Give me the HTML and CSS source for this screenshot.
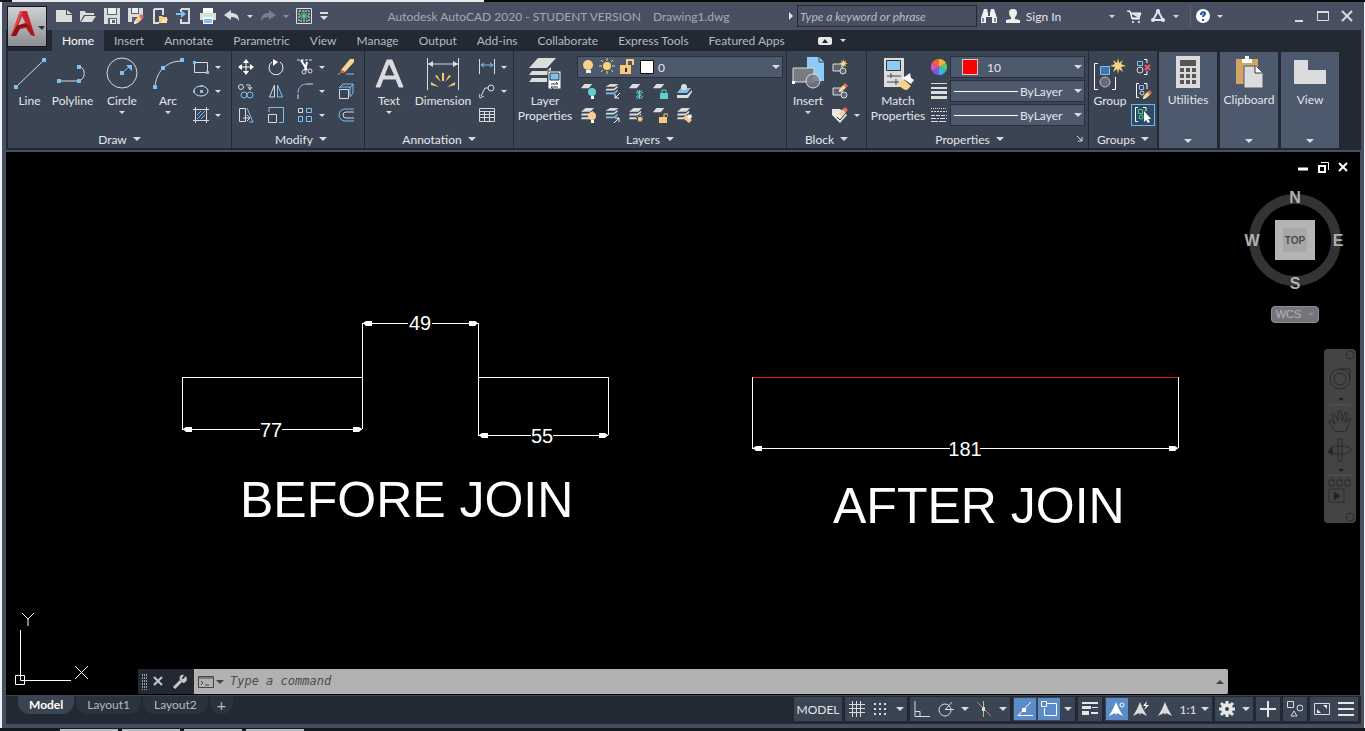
FILE: index.html
```html
<!DOCTYPE html>
<html lang="en">
<head>
    <meta charset="UTF-8">
    <meta name="viewport" content="width=device-width, initial-scale=1.0">
    <title>Autodesk AutoCAD 2020 - Drawing1.dwg</title>
    <link rel="stylesheet" href="styles.css">
</head>
<body>
    <!-- shared shapes for the layer and group icons -->
    <svg class="defs" width="0" height="0">
        <symbol id="sheet" viewBox="0 0 16 16"><path d="M5 1h9L10 6H1z" fill="#dcdcdc"/></symbol>
        <symbol id="stack" viewBox="0 0 16 16">
            <path d="M6 1h9l-4 4H1z" fill="#dcdcdc"/>
            <path d="M2 7h8l4-3v2l-4 3H1zM2 11h8l4-4v2l-4 4H1z" fill="#dcdcdc"/>
        </symbol>
        <symbol id="stackblue" viewBox="0 0 16 16">
            <path d="M6 1h9l-4 3H1z" fill="#dcdcdc"/>
            <path d="M2 6h8l4-3v2l-4 3H1z" fill="#dcdcdc"/>
            <path d="M2 10h8l4-3v2l-4 3H1z" fill="#7cc0f4"/>
        </symbol>
        <symbol id="pencil" viewBox="0 0 10 10">
            <path d="M0 10l1-4 4-4 3 3-4 4z" fill="#f6d08a"/><path d="M5 2l2-2 3 3-2 2z" fill="#e8695f"/><path d="M0 10l1-3 2 2z" fill="#fff"/>
        </symbol>
        <symbol id="burst" viewBox="0 0 16 16">
            <path d="M8 0l1 5 4-3-2 4 5 2-5 1 2 5-4-3-1 5-1-5-4 3 2-5-5-1 5-2-2-4 4 3z" fill="#fbd27f"/>
        </symbol>
    </svg>

    <div class="window">
        <header class="top">
            <button class="logo" aria-label="Application menu">
                <svg width="38" height="38" viewBox="0 0 38 38">
                    <path d="M3 28L12 3h7l8 25-4-1-5-7-6 1-4 7z" fill="#c9242b"/>
                    <path d="M14 8l-4 10 8-2z" fill="#b9bbbd"/>
                    <path d="M3 28l5-10 9-3 5 3-10 2-4 8z" fill="#8d1218"/>
                    <path d="M12 3h3l-7 16-5 9z" fill="#e5484b"/>
                    <path d="M18 18l4-1 5 11-4-1z" fill="#a8161e"/>
                    <path d="M30 18h7l-3 4z" fill="#333"/>
                </svg>
            </button>
            <div class="titlebar">
                <div class="quick">
                    <button class="qa" aria-label="New"><svg viewBox="0 0 16 16"><path d="M0 2h10v5h6v7H0zM11 2l5 4h-5z" fill="#dcdcdc"/></svg></button>
                    <button class="qa" aria-label="Open"><svg viewBox="0 0 16 16"><path d="M0 14V3h5l1 2h8v2H4z" fill="#dcdcdc"/><path d="M5 8h11l-4 6H1z" fill="#dcdcdc"/></svg></button>
                    <button class="qa" aria-label="Save"><svg viewBox="0 0 16 16"><path d="M0 0h16v16H0z" fill="#dcdcdc"/><path d="M3 0h10v7H3zM4 10h9v6H4z" fill="#596274"/><path d="M4 0h8v6H4zM6 11h6v5H6z" fill="#eee"/><path d="M8 12h3v3H8z" fill="#596274"/></svg></button>
                    <button class="qa" aria-label="Save as"><svg viewBox="0 0 16 16"><path d="M0 0h15v7l-7 7H0z" fill="#dcdcdc"/><path d="M3 0h8v6H3zM4 9h5v5H4z" fill="#596274"/><path d="M4 0h6v5H4z" fill="#eee"/><use href="#pencil" x="6" y="6" width="10" height="10"/></svg></button>
                    <button class="qa" aria-label="Open from web"><svg viewBox="0 0 16 16"><path d="M2 1h9v6M2 1v14h5" stroke="#dcdcdc" stroke-width="2" fill="none"/><path d="M7 15V8h3l1 1h4v6z" fill="#f6cf85"/><path d="M9 15l2-4h5l-2 4z" fill="#fde3ae"/></svg></button>
                    <button class="qa" aria-label="Save to web"><svg viewBox="0 0 16 16"><path d="M5 1h8v14H5v-4M5 1v3" stroke="#dcdcdc" stroke-width="2" fill="none"/><path d="M0 5h5V2l5 4-5 4V7H0z" fill="#7cc0f4"/></svg></button>
                    <button class="qa" aria-label="Plot"><svg viewBox="0 0 16 16"><path d="M3 0h10v5H3z" fill="#fff"/><path d="M0 5h16v7H0z" fill="#dcdcdc"/><path d="M3 9h10v7H3z" fill="#fff"/><path d="M4 11h8v4H4z" fill="#7cc0f4"/></svg></button>
                    <button class="qa" aria-label="Undo"><svg viewBox="0 0 16 16"><path d="M0 7l7-5v3c5 0 8 2 8 8-2-3-4-4-8-4v3z" fill="#dcdcdc"/></svg></button>
                    <button class="drop" aria-label="Undo list"></button>
                    <button class="qa" aria-label="Redo"><svg viewBox="0 0 16 16"><path d="M16 7L9 2v3c-5 0-8 2-8 8 2-3 4-4 8-4v3z" fill="#767e8d"/></svg></button>
                    <button class="drop dim" aria-label="Redo list"></button>
                    <button class="qa" aria-label="Select"><svg viewBox="0 0 16 16" stroke="#dcdcdc" fill="none"><path d="M.5.5h15v15H.5z"/><path d="M3 3h10v10H3z" stroke-dasharray="2 1"/><path d="M8 3v10M3 8h10M5 5l6 6M11 5l-6 6" stroke="#63d48b"/></svg></button>
                    <button class="qa narrow" aria-label="Customize"><svg viewBox="0 0 16 16"><path d="M4 5h8" stroke="#dcdcdc" stroke-width="2"/><path d="M4 8h8l-4 4z" fill="#dcdcdc"/></svg></button>
                </div>
                <div class="title"><span>Autodesk AutoCAD 2020 - STUDENT VERSION</span><span>Drawing1.dwg</span></div>
                <div class="account">
                    <button class="drop side" aria-label="Collapse search"></button>
                    <input class="search" type="text" placeholder="Type a keyword or phrase" aria-label="Search">
                    <button class="qa" aria-label="Find"><svg viewBox="0 0 16 16"><path d="M3 1h3l1 4h2l1-4h3l3 9v5h-5V9H5v6H0v-5z" fill="#f0f0f0"/><path d="M2 10v4M14 10v4" stroke="#222"/><path d="M7 5v3h2V5" fill="#555"/></svg></button>
                    <button class="qa" aria-label="User"><svg viewBox="0 0 16 16"><path d="M8 1c6 0 4 7 2 8v2l5 1v3H1v-3l5-1V9C4 8 2 1 8 1z" fill="#f0f0f0"/></svg></button>
                    <button class="signin">Sign In</button>
                    <button class="drop" aria-label="Account menu"></button>
                    <button class="qa cart" aria-label="App Store"><svg viewBox="0 0 16 16"><path d="M1 3h3l2 8h8M5 5h10l-2 5H6z" fill="#dcdcdc" stroke="#fff"/><circle cx="7" cy="14" r="1" fill="#fff"/><circle cx="13" cy="14" r="1" fill="#fff"/></svg></button>
                    <button class="qa" aria-label="Stay connected"><svg viewBox="0 0 16 16"><path d="M8 3l5 9H3z" fill="none" stroke="#dfe6f2" stroke-width="2"/><circle cx="8" cy="3" r="2" fill="#dfe6f2"/><circle cx="3" cy="12" r="2" fill="#dfe6f2"/><circle cx="13" cy="12" r="2" fill="#dfe6f2"/></svg></button>
                    <button class="drop" aria-label="Connect menu"></button>
                    <button class="qa help" aria-label="Help"><svg viewBox="0 0 16 16"><circle cx="8" cy="8" r="7" fill="#fff"/><path d="M6 7c0-4 5-3 4-1-1 1-2 1-2 3M8 11v2" stroke="#23519b" stroke-width="2" fill="none"/></svg></button>
                    <button class="drop" aria-label="Help menu"></button>
                    <div class="winbtns">
                        <button class="qa" aria-label="Minimize"><svg viewBox="0 0 16 16"><path d="M4 13h8" stroke="#dcdcdc" stroke-width="2"/></svg></button>
                        <button class="qa" aria-label="Maximize"><svg viewBox="0 0 16 16"><path d="M2.500 3.500h11v9h-11z" stroke="#dcdcdc" fill="none"/><path d="M2 4h12" stroke="#dcdcdc" stroke-width="2"/></svg></button>
                        <button class="qa" aria-label="Close"><svg viewBox="0 0 16 16"><path d="M3 3l10 10M13 3L3 13" stroke="#dcdcdc" stroke-width="2"/></svg></button>
                    </div>
                </div>
            </div>
            <nav class="tabs">
                <a href="#" class="active">Home</a>
                <a href="#">Insert</a>
                <a href="#">Annotate</a>
                <a href="#">Parametric</a>
                <a href="#">View</a>
                <a href="#">Manage</a>
                <a href="#">Output</a>
                <a href="#">Add-ins</a>
                <a href="#">Collaborate</a>
                <a href="#">Express Tools</a>
                <a href="#">Featured Apps</a>
                <button class="qa tabmin" aria-label="Minimize ribbon"><svg viewBox="0 0 16 16"><rect x="1" y="4" width="14" height="8" rx="2" fill="#e8e8e8"/><path d="M5 10h6L8 6z" fill="#222"/></svg></button>
                <button class="drop" aria-label="Ribbon display"></button>
            </nav>
        </header>

        <main class="ribbon">
            <section class="panel draw">
                <div class="tools">
                    <button class="big line"><svg viewBox="0 0 32 32"><path d="M2 30L30 3" stroke="#d8dbe0" fill="none"/><path d="M0 28h4v4H0zM28 1h4v4h-4z" fill="#7cc0f4"/></svg>Line</button>
                    <button class="big poly"><svg viewBox="0 0 32 32"><path d="M2 24h20a8 8 0 0 0 0-15" stroke="#d8dbe0" fill="none"/><path d="M0 22h4v4H0zM20 22h4v4h-4zM20 8h4v4h-4z" fill="#7cc0f4"/></svg>Polyline</button>
                    <button class="big circle"><svg viewBox="0 0 32 32"><circle cx="16" cy="16" r="15" stroke="#d8dbe0" fill="none"/><path d="M16 16l7-6" stroke="#7cc0f4"/><path d="M14 14h4v4h-4zM20 8h6v6z" fill="#7cc0f4"/></svg>Circle<i class="caret"></i></button>
                    <button class="big arc"><svg viewBox="0 0 32 32"><path d="M3 30C4 16 13 4 30 4" stroke="#d8dbe0" fill="none"/><path d="M1 28h4v4H1zM9 9h4v4H9zM28 1h4v4h-4z" fill="#7cc0f4"/></svg>Arc<i class="caret"></i></button>
                    <div class="grid pair">
                        <button class="tool" aria-label="Rectangle"><svg viewBox="0 0 16 16"><path d="M1.500 3.500h13v10h-13z" class="l"/><path d="M0 2h3v3H0zM13 12h3v3h-3z" class="fb"/></svg></button><button class="drop" aria-label="More"></button>
                        <button class="tool" aria-label="Ellipse"><svg viewBox="0 0 16 16"><ellipse cx="8" cy="8" rx="7" ry="5" class="l"/><path d="M7 7h3v3H7zM0 7h2v3H0zM7 2h3v2H7z" class="fb"/></svg></button><button class="drop" aria-label="More"></button>
                        <button class="tool" aria-label="Hatch"><svg viewBox="0 0 16 16"><path d="M2.500 0v16M13.500 0v16M0 2.500h16M0 13.500h16" class="l"/><path d="M4 8l4-4M4 12l8-8M8 12l4-4" class="b"/></svg></button><button class="drop" aria-label="More"></button>
                    </div>
                </div>
                <button class="ptitle">Draw<i class="caret lg"></i></button>
            </section>

            <section class="panel modify">
                <div class="tools">
                    <div class="grid four">
                        <button class="tool" aria-label="Move"><svg viewBox="0 0 16 16"><path d="M8 2v12M2 8h12" stroke="#fff"/><path d="M8 0l3 4H5zM8 16l3-4H5zM0 8l4-3v6zM16 8l-4-3v6z" fill="#fff"/></svg></button>
                        <button class="tool" aria-label="Rotate"><svg viewBox="0 0 16 16"><path d="M4 3a7 7 0 1 0 8 0" class="l2"/><path d="M5 0l5 3-5 4z" fill="#fff"/></svg></button>
                        <button class="tool" aria-label="Trim"><svg viewBox="0 0 16 16"><path d="M0 1h16" class="l" stroke-dasharray="3 1"/><path d="M4 1l6 10M10 3L8 11" stroke="#fff" stroke-width="2"/><circle cx="7" cy="13" r="2" class="l"/><circle cx="13" cy="12" r="2" class="l"/></svg></button>
                        <button class="drop" aria-label="More"></button>
                        <button class="tool" aria-label="Erase"><svg viewBox="0 0 16 16"><path d="M3 11L12 0h4v3L7 13z" fill="#f8d38b"/><path d="M3 10l4 4H2z" fill="#e8574e"/><path d="M0 15h2M8 15h8" class="b"/></svg></button>
                        <button class="tool" aria-label="Copy"><svg viewBox="0 0 16 16"><circle cx="3" cy="4" r="2.500" class="l"/><path d="M8 2h4v4M10 4l2 3 2-3" class="l"/><circle cx="6" cy="12" r="3" class="b"/><circle cx="12" cy="12" r="3" class="b"/></svg></button>
                        <button class="tool" aria-label="Mirror"><svg viewBox="0 0 16 16"><path d="M6.500 2v12h-5z" class="l"/><path d="M9.500 2v12h5z" class="b"/></svg></button>
                        <button class="tool" aria-label="Fillet"><svg viewBox="0 0 16 16"><path d="M1 16V11M10 1h6" class="l"/><path d="M1 10c0-6 4-9 9-9" class="b"/></svg></button>
                        <button class="drop" aria-label="More"></button>
                        <button class="tool" aria-label="Explode"><svg viewBox="0 0 16 16"><path d="M1.500 6.500h9v9h-9z" class="l"/><path d="M1 5l4-4h10v9l-3 4M12 5l3-4M12 4v9M2 4h10" class="b"/></svg></button>
                        <button class="tool" aria-label="Stretch"><svg viewBox="0 0 16 16"><path d="M1.500 1.500h6v13h-6zM5 11h6M9 8l3 3-3 3" class="l"/><path d="M9 1l6 14h-4" class="b"/></svg></button>
                        <button class="tool" aria-label="Scale"><svg viewBox="0 0 16 16"><path d="M.5 7.500h8v8h-8z" class="l"/><path d="M1 5V.5h14.500v15H11" class="b"/></svg></button>
                        <button class="tool" aria-label="Array"><svg viewBox="0 0 16 16"><path d="M1.500 1.500h4v4h-4z" class="l"/><path d="M9.500 1.500h5v4h-5zM1.500 9.500h4v5h-4zM9.500 9.500h5v5h-5z" class="b"/></svg></button>
                        <button class="drop" aria-label="More"></button>
                        <button class="tool" aria-label="Offset"><svg viewBox="0 0 16 16"><path d="M16 2H7a6 6 0 0 0 0 12h9" class="b"/><path d="M16 5H8a3 3 0 0 0 0 6h8" class="l"/></svg></button>
                    </div>
                </div>
                <button class="ptitle">Modify<i class="caret lg"></i></button>
            </section>

            <section class="panel annotation">
                <div class="tools">
                    <button class="big text"><svg viewBox="0 0 32 32"><path d="M3 30L14 3h5l11 27h-4l-3-8H10l-3 8zM11 19h11L16 6z" fill="#dcdcdc" stroke="#dcdcdc" fill-rule="evenodd"/></svg>Text<i class="caret"></i></button>
                    <button class="big dimension"><svg viewBox="0 0 32 32"><path d="M.5 1v32M31.500 1v32M1 7h30" class="l"/><path d="M1 7l5-3v6zM31 7l-5-3v6z" fill="#dcdcdc"/><path d="M15 16h2v8h-2zM8 19l2-1 4 7zM24 19l-2-1-4 7zM4 25v3l8 2zM28 25v3l-8 2z" fill="#f6cf6a"/></svg>Dimension</button>
                    <div class="grid pair">
                        <button class="tool" aria-label="Linear"><svg viewBox="0 0 16 16"><path d="M.5 0v15M15.500 0v15" class="l"/><path d="M2 6h12M5 4L2 6l3 2M11 4l3 2-3 2" class="b"/></svg></button><button class="drop" aria-label="More"></button>
                        <button class="tool" aria-label="Leader"><svg viewBox="0 0 16 16"><circle cx="12" cy="5" r="3" class="l"/><path d="M9 5H6L2 13M0 11l1 4 4-2" class="l"/></svg></button><button class="drop" aria-label="More"></button>
                        <button class="tool" aria-label="Table"><svg viewBox="0 0 16 16"><path d="M.5 1.500h15v13H.5zM1 4.500h15M1 7.500h15M1 10.500h15M5.500 5v10M10.500 5v10" class="l"/></svg></button>
                    </div>
                </div>
                <button class="ptitle">Annotation<i class="caret lg"></i></button>
            </section>

            <section class="panel layers">
                <div class="tools">
                    <button class="big layerprops"><svg viewBox="0 0 32 32"><path d="M9 1h18L18 11H0z" fill="#dcdcdc"/><path d="M3 14h15l4-4v4l-4 4H0zM3 21h15v4H0z" fill="#dcdcdc"/><path d="M19 14h13v18H19z" fill="#fff" stroke="#3b4453"/><path d="M21 16h9v7h-9z" fill="#7cc0f4" stroke="#333"/><path d="M22 27h7l-2-2M29 30h-7l2 2" stroke="#333" fill="none"/></svg>Layer<br>Properties</button>
                    <div class="layerside">
                        <div class="combo">
                            <svg class="states" viewBox="0 0 80 20" width="80" height="20">
                                <circle cx="10" cy="8" r="5" fill="#fbd08a"/><path d="M8 13h5v3H8z" fill="#eee"/>
                                <circle cx="29" cy="9" r="4" fill="#fbd27f"/><path d="M29 1v3M29 14v3M21 9h3M34 9h3M23 3l2 2M33 13l2 2M35 3l-2 2M25 13l-2 2" stroke="#fbd27f" stroke-width="1"/>
                                <path d="M42 8h11v9H42z" fill="#f8c977"/><path d="M49 9V3h6v5" stroke="#f8c977" stroke-width="2" fill="none"/><path d="M47 11h2v4h-2z" fill="#333"/>
                                <path d="M62.500 3.500h13v13h-13z" fill="#fff" stroke="#111"/>
                            </svg>
                            <select aria-label="Layer"><option>0</option></select>
                        </div>
                        <div class="grid five">
                            <button class="tool" aria-label="Off"><svg viewBox="0 0 16 16"><use href="#sheet" width="14" height="14"/><circle cx="12" cy="9" r="4" fill="#5fd0cf"/><path d="M11 13h3v3h-3z" fill="#fff"/></svg></button>
                            <button class="tool" aria-label="Isolate"><svg viewBox="0 0 16 16"><use href="#stackblue" width="16" height="15"/><path d="M16 10l-5 5M11 11v4h4" stroke="#fff" fill="none"/></svg></button>
                            <button class="tool" aria-label="Freeze"><svg viewBox="0 0 16 16"><use href="#sheet" width="14" height="14"/><path d="M11.500 7v9M8 9l7 5M15 9l-7 5M9 7l2 3 3-3M9 16l2-3 3 3" stroke="#5fd0cf" fill="none"/></svg></button>
                            <button class="tool" aria-label="Lock"><svg viewBox="0 0 16 16"><use href="#sheet" width="14" height="14"/><path d="M8 10h8v6H8z" fill="#5fd0cf"/><path d="M10 10V7h4v3" stroke="#5fd0cf" fill="none"/></svg></button>
                            <button class="tool" aria-label="Make current"><svg viewBox="0 0 16 16"><path d="M5 5h10l-4 5H1z" fill="#7cc0f4"/><path d="M1 12h10l5-5v2l-4 6H1z" fill="#dcdcdc"/><circle cx="8" cy="4" r="3" fill="#dcdcdc"/></svg></button>
                            <button class="tool" aria-label="Turn all on"><svg viewBox="0 0 16 16"><use href="#stack" width="15" height="15"/><circle cx="12" cy="9" r="4" fill="#fbd08a"/><path d="M11 13h3v3h-3z" fill="#fff"/></svg></button>
                            <button class="tool" aria-label="Unisolate"><svg viewBox="0 0 16 16"><use href="#stackblue" width="16" height="15"/><path d="M10 16l5-5M11 11h4v4" stroke="#fff" fill="none"/></svg></button>
                            <button class="tool" aria-label="Thaw"><svg viewBox="0 0 16 16"><use href="#stack" width="15" height="15"/><circle cx="12" cy="12" r="4" fill="#3b4453"/><circle cx="12" cy="12" r="2" fill="#fbd08a"/><path d="M12 8v8M8 12h8M9 9l6 6M15 9l-6 6" stroke="#fbd08a" stroke-dasharray="1 1"/></svg></button>
                            <button class="tool" aria-label="Unlock"><svg viewBox="0 0 16 16"><use href="#sheet" width="14" height="14"/><path d="M7 10h8v6H7z" fill="#f8c977"/><path d="M12 10V7h4v3" stroke="#f8c977" fill="none"/></svg></button>
                            <button class="tool" aria-label="Match layer"><svg viewBox="0 0 16 16"><use href="#stack" width="15" height="15"/><path d="M7 11l3-3 6 5-3 3z" fill="#f6d08a"/><path d="M11 10l4-3 1 3-2 2z" fill="#fff"/></svg></button>
                        </div>
                    </div>
                </div>
                <button class="ptitle">Layers<i class="caret lg"></i></button>
            </section>

            <section class="panel block">
                <div class="tools">
                    <button class="big insert"><svg viewBox="0 0 32 32"><path d="M15 0h12l5 5v19H15z" fill="#8ecbf5"/><path d="M27 0v5h5" stroke="#3b4453" fill="none"/><path d="M1 11h21v14H1z" fill="#777b83" stroke="#ddd"/><circle cx="21" cy="24" r="7" fill="#777b83" fill-opacity=".8" stroke="#ddd"/><path d="M0 24h3v3H0z" fill="#fff"/></svg>Insert<i class="caret"></i></button>
                    <div class="grid pair">
                        <button class="tool" aria-label="Create block"><svg viewBox="0 0 16 16"><path d="M1 5h9v7H1z" fill="#5f6570" stroke="#ddd"/><circle cx="11" cy="12" r="3" fill="#5f6570" stroke="#ddd"/><use href="#burst" x="7" y="0" width="9" height="9"/></svg></button><span></span>
                        <button class="tool" aria-label="Edit block"><svg viewBox="0 0 16 16"><path d="M1 5h9v7H1z" fill="#5f6570" stroke="#ddd"/><circle cx="12" cy="12" r="3" fill="#5f6570" stroke="#ddd"/><use href="#pencil" x="7" y="0" width="9" height="9"/></svg></button><span></span>
                        <button class="tool" aria-label="Edit attributes"><svg viewBox="0 0 16 16"><path d="M0 2h8l7 6-7 8-8-8z" fill="#e8e8e8"/><path d="M5 10l3 3 5-6" stroke="#333" fill="none"/><use href="#pencil" x="6" y="0" width="10" height="10"/></svg></button><button class="drop" aria-label="More"></button>
                    </div>
                </div>
                <button class="ptitle">Block<i class="caret lg"></i></button>
            </section>

            <section class="panel properties">
                <div class="tools">
                    <button class="big match"><svg viewBox="0 0 32 32"><path d="M2 1h20v29H2z" fill="#dcdcdc"/><path d="M4.500 3.500h14v10h-14z" fill="#8ecbf5" stroke="#333"/><path d="M5 19h14M5 25h12M9 16v5M14 22v6" stroke="#444"/><path d="M16 27l5-5 8 7-4 4c-3 0-6-2-9-6z" fill="#f8d38b"/><path d="M20 21l4-2 4-3 1 5 3 2-3 4z" fill="#fff"/></svg>Match<br>Properties</button>
                    <div class="props">
                        <svg viewBox="0 0 16 16"><path d="M8 8V0a8 8 0 0 1 7 4z" fill="#f6b13c"/><path d="M8 8l7-4a8 8 0 0 1 0 8z" fill="#5ac46a"/><path d="M8 8l7 4a8 8 0 0 1-7 4z" fill="#35b7e8"/><path d="M8 8v8a8 8 0 0 1-7-4z" fill="#7e57e0"/><path d="M8 8l-7 4a8 8 0 0 1 0-8z" fill="#e04fb5"/><path d="M8 8L1 4a8 8 0 0 1 7-4z" fill="#f0633e"/></svg>
                        <div class="combo"><span class="swatch"></span><select aria-label="Object color"><option>10</option></select></div>
                        <svg viewBox="0 0 16 16"><path d="M0 0h16v1H0zM0 4h16v2H0zM0 8h16v3H0zM0 13h16v3H0z" fill="#dcdcdc"/></svg>
                        <div class="combo"><span class="stroke"></span><select aria-label="Lineweight"><option>ByLayer</option></select></div>
                        <svg viewBox="0 0 16 16" stroke="#dcdcdc"><path d="M0 1.500h16" stroke-dasharray="1 1"/><path d="M0 4.500h16" stroke-dasharray="2 1"/><path d="M0 8.500h16" stroke-dasharray="4 1"/><path d="M0 11.500h16" stroke-dasharray="5 1 2 1"/><path d="M0 14.500h16" stroke-dasharray="7 1"/></svg>
                        <div class="combo"><span class="stroke"></span><select aria-label="Linetype"><option>ByLayer</option></select></div>
                    </div>
                </div>
                <div class="prow">
                    <button class="ptitle">Properties<i class="caret lg"></i></button>
                    <button class="launcher" aria-label="Properties palette"><svg width="6" height="6" viewBox="0 0 6 6"><path d="M0 0l5 5M5 1v4H1" stroke="#dcdcdc" fill="none"/></svg></button>
                </div>
            </section>

            <section class="panel groups">
                <div class="tools">
                    <button class="big group"><svg viewBox="0 0 32 32"><path d="M4 6.500H.5v26H4M18 32.500h3.500V20" stroke="#fff" fill="none"/><path d="M6.500 9.500h9v8h-9z" fill="#3a76a8" stroke="#7cc0f4"/><circle cx="11" cy="25" r="5" fill="#666b74" stroke="#bbb"/><use href="#burst" x="16" y="1" width="16" height="16"/></svg>Group</button>
                    <div class="grid one">
                        <button class="tool" aria-label="Ungroup"><svg viewBox="0 0 16 16"><path d="M1.500 2.500h5v4h-5z" class="b"/><circle cx="4" cy="11" r="3" class="l"/><path d="M8 .5h3V4M8 15.500h3V12" stroke="#fff" fill="none"/><path d="M9 6l5 5M14 6l-5 5" stroke="#f05b5b" stroke-width="2"/></svg></button>
                        <button class="tool" aria-label="Group edit"><svg viewBox="0 0 16 16"><path d="M3 .5H.5v14H3M8 .5h3V6" stroke="#fff" fill="none"/><path d="M3.500 2.500h4v4h-4z" class="b"/><circle cx="6" cy="10" r="2" class="l"/><use href="#pencil" x="7" y="7" width="9" height="9"/></svg></button>
                        <button class="tool selected" aria-label="Group selection"><svg viewBox="0 0 16 16"><path d="M3 .5H.5v14H3M8 .5h3V4" stroke="#fff" fill="none"/><path d="M3.500 2.500h4v4h-4z" stroke="#4fce7a" fill="none"/><circle cx="6" cy="10" r="2" stroke="#4fce7a" fill="none"/><path d="M9 4v11l2-2 2 3 2-1-2-3h3z" fill="#fff"/></svg></button>
                    </div>
                </div>
                <button class="ptitle">Groups<i class="caret lg"></i></button>
            </section>

            <button class="folded"><svg viewBox="0 0 32 32"><path d="M4 0h24v32H4z" fill="#dcdcdc"/><path d="M8 4h16v6H8z" fill="#555"/><path d="M8 12h4v4H8zM14 12h4v4h-4zM20 12h4v4h-4zM8 18h4v4H8zM14 18h4v4h-4zM20 18h4v4h-4zM8 24h4v4H8zM14 24h4v4h-4zM20 24h4v4h-4z" fill="#555"/></svg>Utilities<i class="caret lg"></i></button>
            <button class="folded"><svg viewBox="0 0 32 32"><path d="M3 3h22v25H3z" fill="#d2a566"/><path d="M9 3h3V0h4v3h3v4H9z" fill="#fff"/><path d="M11 10h12l7 7v15H11z" fill="#dcdcdc" stroke="#4d596d"/><path d="M22 10v7h7" fill="#fff" stroke="#333"/></svg>Clipboard<i class="caret lg"></i></button>
            <button class="folded"><svg viewBox="0 0 32 32"><path d="M0 4h14v10h18v14H0z" fill="#dcdcdc"/></svg>View<i class="caret lg"></i></button>
        </main>

        <div class="canvas">
            <svg class="drawing" width="100%" height="100%">
                <g class="geometry">
                    <path d="M176 277V225H356M356 171V277M472 171V283M472 225H602V283"/>
                    <path d="M356 171H402M426 171H472M176 277H254M276 277H356M472 283H525M547 283H602"/>
                    <path d="M746 225V296M1172 225V296M746 296H944M974 296H1172"/>
                </g>
                <rect class="joined" x="747" y="225" width="425" height="1"/>
                <path class="arrows" d="M357 171l3-2h6v5h-6zM472 171l-3-2h-6v5h6zM177 277l3-2h6v5h-6zM356 277l-3-2h-6v5h6zM473 283l3-2h6v5h-6zM602 283l-3-2h-6v5h6zM747 296l3-2h6v5h-6zM1172 296l-3-2h-6v5h6z"/>
                <g class="dims">
                    <text x="414" y="178">49</text>
                    <text x="265" y="285">77</text>
                    <text x="536" y="291">55</text>
                    <text x="959" y="304">181</text>
                </g>
                <g class="captions">
                    <text x="234" y="365">BEFORE JOIN</text>
                    <text x="827" y="371">AFTER JOIN</text>
                </g>
            </svg>

            <svg class="ucs" width="76" height="76" viewBox="0 0 76 76">
                <path d="M7.500 18v50.500H58M2.500 63.500h9v9h-9zM62 54l13 13M75 54L62 67M9 1l6 6 6-6M15 7v7"/>
            </svg>

            <div class="docbtns">
                <button aria-label="Minimize drawing"><svg viewBox="0 0 12 12"><path d="M1 8h10" stroke-width="3"/></svg></button>
                <button aria-label="Restore drawing"><svg viewBox="0 0 12 12"><path d="M2 5h6v6H2z" stroke-width="2"/><path d="M4 1.500h7.500V9" stroke-width="1"/></svg></button>
                <button aria-label="Close drawing"><svg viewBox="0 0 12 12"><path d="M2 2l8 8M10 2l-8 8" stroke-width="2"/></svg></button>
            </div>

            <div class="viewcube">
                <svg width="104" height="108" viewBox="0 0 104 108">
                    <circle cx="52" cy="54" r="41" fill="none" stroke="#333" stroke-width="10"/>
                    <path d="M32 34h40v40H32z" fill="#b4b4b4"/>
                    <path d="M40 42h24v24H40z" fill="#a6a7a9"/>
                    <text x="52" y="58" class="face">TOP</text>
                    <text x="52" y="17">N</text>
                    <text x="52" y="103">S</text>
                    <text x="9" y="60">W</text>
                    <text x="95" y="60">E</text>
                </svg>
                <button class="wcs">WCS<i class="caret"></i></button>
            </div>

            <div class="navbar">
                <svg width="32" height="174" viewBox="0 0 32 174" fill="none" stroke="#2a2a2a">
                    <circle cx="26" cy="6" r="4"/>
                    <circle cx="16" cy="30" r="10"/><circle cx="16" cy="30" r="6"/><path d="M16 20h10v10"/>
                    <path d="M14 49h6l-3 3zM14 120h6l-3 3z" fill="#202020" stroke="none"/>
                    <path d="M4 56h24M4 126h24" stroke="#555"/>
                    <path d="M11 82l-6-9 1-2 5 4-3-10 2-1 4 8V62h3l1 10 3-9 2 1-2 10 4-5 2 1-5 12-2 1z"/>
                    <path d="M14 90h4v22h-4z"/><ellipse cx="16" cy="101" rx="11" ry="4"/><path d="M8 99l-4 4 5 3z" fill="#202020"/>
                    <path d="M5 131h5v6H5zM13 131h5v6h-5zM21 131h5v6h-5zM5 140h15v13H5z"/><path d="M10 143l6 4-6 4z" fill="#202020"/>
                    <circle cx="26" cy="168" r="4"/>
                </svg>
            </div>

            <form class="command">
                <span class="grip"></span>
                <button type="button" aria-label="Close"><svg viewBox="0 0 16 16"><path d="M4 3l8 8M12 3l-8 8" stroke="#c8c8c8" stroke-width="2"/></svg></button>
                <button type="button" aria-label="Customize"><svg viewBox="0 0 16 16"><path d="M2 14l7-7" stroke="#c8c8c8" stroke-width="3"/><path d="M14 2l-3 3-1 0V4l2-3C8 0 7 4 8 6l3 3c3 0 5-3 3-7z" fill="#c8c8c8"/></svg></button>
                <label class="field">
                    <svg width="16" height="12" viewBox="0 0 16 12" fill="none" stroke="#444"><path d="M.5.5h15v11H.5zM1 2h14M3 5l2 2-2 2M7 9h4"/></svg>
                    <i class="caret"></i>
                    <input type="text" placeholder="Type a command" aria-label="Command">
                    <i class="caret up"></i>
                </label>
            </form>
        </div>

        <footer class="statusbar">
            <nav class="layouts">
                <a href="#" class="active">Model</a>
                <a href="#">Layout1</a>
                <a href="#">Layout2</a>
                <a href="#" class="plus" aria-label="New layout">+</a>
            </nav>
            <div class="status">
                <div class="sgroup"><button class="wide">MODEL</button></div>
                <div class="sgroup">
                    <button aria-label="Grid"><svg viewBox="0 0 16 16"><path d="M3.500 0v16M7.500 0v16M11.500 0v16M0 3.500h16M0 7.500h16M0 11.500h16" class="l"/></svg></button>
                    <button aria-label="Snap"><svg viewBox="0 0 16 16"><path d="M1 3h14M1 8h14M1 13h14" stroke="#d8dbe0" stroke-width="2" stroke-dasharray="2 3"/></svg></button>
                    <button class="drop lg" aria-label="Snap settings"></button>
                </div>
                <div class="sgroup">
                    <button aria-label="Ortho"><svg viewBox="0 0 16 16"><path d="M1 0v15.500h15M1 10.500h5V15" class="l"/></svg></button>
                    <button aria-label="Polar"><svg viewBox="0 0 16 16"><circle cx="7" cy="9" r="6" class="l"/><path d="M7 8.500h9M7 9l7-8" class="l"/></svg></button>
                    <button class="drop lg" aria-label="Polar settings"></button>
                    <button aria-label="Isodraft"><svg viewBox="0 0 16 16"><path d="M1 1l14 14" stroke="#d77"/><path d="M7.500 0v16" stroke="#7d9"/><path d="M6 6h3v4H6z" fill="#d8dbe0"/></svg></button>
                    <button class="drop lg" aria-label="Isodraft settings"></button>
                </div>
                <div class="sgroup">
                    <button class="on" aria-label="Object snap tracking"><svg viewBox="0 0 16 16"><path d="M14 1L1 14.500h15" stroke="#fff" fill="none"/><path d="M5 7h4v4H5z" fill="#fff"/></svg></button>
                    <button class="on" aria-label="Object snap"><svg viewBox="0 0 16 16"><path d="M6 2.500h9.500v12h-12V7M.5.5h5v5h-5z" stroke="#fff" fill="none"/></svg></button>
                    <button class="drop lg" aria-label="Object snap settings"></button>
                </div>
                <div class="sgroup"><button aria-label="Lineweight"><svg viewBox="0 0 16 16"><path d="M0 1h16v2H0zM0 5h9v3H0zM10 6h6v1h-6zM0 10h7v4H0zM9 11h7v2H9z" fill="#e6e6e6"/></svg></button></div>
                <div class="sgroup">
                    <button class="on" aria-label="Annotation visibility"><svg viewBox="0 0 16 16"><path d="M7 1l3 7 4 7-6-3-1 2-1-2-6 3 4-7z" fill="#fff"/><circle cx="13" cy="4" r="2" stroke="#fff" fill="none"/></svg></button>
                    <button aria-label="Auto scale"><svg viewBox="0 0 16 16"><path d="M7 1l3 7 4 7-6-3-1 2-1-2-6 3 4-7z" fill="#dcdcdc"/><path d="M14 0l-4 5h3l-2 4 5-5h-3z" fill="#fff"/></svg></button>
                    <button aria-label="Annotation scale"><svg viewBox="0 0 16 16"><path d="M8 1l3 7 4 7-6-3-1 2-1-2-6 3 4-7z" fill="#dcdcdc"/></svg></button>
                    <button class="scale">1:1<i class="caret lg"></i></button>
                </div>
                <div class="sgroup">
                    <button aria-label="Workspace"><svg viewBox="0 0 16 16"><circle cx="8" cy="8" r="4" fill="none" stroke="#e6e6e6" stroke-width="4"/><path d="M8 0v3M8 13v3M0 8h3M13 8h3M2 2l3 3M11 11l3 3M14 2l-3 3M5 11l-3 3" stroke="#e6e6e6" stroke-width="3"/></svg></button>
                    <button class="drop lg" aria-label="Workspace list"></button>
                </div>
                <div class="sgroup"><button aria-label="Annotation monitor"><svg viewBox="0 0 16 16"><path d="M8 0v16M0 8h16" stroke="#e6e6e6" stroke-width="2"/></svg></button></div>
                <div class="sgroup"><button aria-label="Isolate objects"><svg viewBox="0 0 16 16"><path d="M.5.5h6v6h-6zM7 10l3 5H4z" class="l"/><circle cx="13" cy="7" r="3" class="l"/></svg></button></div>
                <div class="sgroup">
                    <button aria-label="Clean screen"><svg viewBox="0 0 16 16"><path d="M.5 2.500h15v11H.5z" class="l"/><path d="M9 4h4v4zM3 8v4h4z" fill="#e6e6e6"/></svg></button>
                    <button aria-label="Customization"><svg viewBox="0 0 16 16"><path d="M0 2h16M0 8h16M0 14h16" stroke="#e6e6e6" stroke-width="2"/></svg></button>
                </div>
            </div>
        </footer>
    </div>
    <div class="taskbar"><i></i><i></i><i></i><i></i></div>
</body>
</html>
```
FILE: styles.css
```css
* {
    box-sizing: border-box;
}
body {
    margin: 0;
    height: 100vh;
    display: flex;
    flex-direction: column;
    overflow: hidden;
    background: linear-gradient(90deg, #15171b 12px, #e8eaee 12px, #e8eaee 484px, #08090b 484px) top / 100% 2px no-repeat #eef1f5;
    font-family: Lato, "Open Sans", sans-serif;
    font-size: 12px;
    line-height: 15px;
    color: #e4e6ea;
}
a {
    color: inherit;
    text-decoration: none;
}
button {
    padding: 0;
    border: 0;
    background: none;
    color: inherit;
    font: inherit;
    display: flex;
    align-items: center;
    justify-content: center;
}
svg {
    display: block;
    flex: none;
}
input, select {
    font: inherit;
    color: inherit;
    border: 0;
    background: none;
    outline: none;
    min-width: 0;
}
.defs {
    position: absolute;
}
.l {
    stroke: #d8dbe0;
    fill: none;
}
.l2 {
    stroke: #f0f0f0;
    fill: none;
}
.b {
    stroke: #7cc0f4;
    fill: none;
}
.fb {
    fill: #7cc0f4;
}

.window {
    flex: 1;
    min-height: 0;
    margin: 2px 1px 0 2px;
    padding: 0 3px 4px 4px;
    display: flex;
    flex-direction: column;
    background: #454f60;
}

/* carets */
.caret, .drop::after {
    content: "";
    display: block;
    border: 3px solid transparent;
    border-top-color: #d8dbe0;
    border-bottom: 0;
}
.caret.lg, .drop.lg::after {
    border-width: 4px 4px 0 4px;
}
.caret.up {
    border-width: 0 4px 4px 4px;
    border-bottom: 4px solid #444;
}
.drop {
    width: 12px;
    height: 24px;
}
.drop.dim::after {
    border-top-color: #8a909c;
}
.drop.side::after {
    border: 4px solid transparent;
    border-left-color: #e4e6ea;
    border-right: 0;
}

/* title bar and tabs */
.top {
    display: grid;
    grid-template-columns: 46px 1fr;
    grid-template-rows: 28px 21px;
    background: linear-gradient(#474f61 28px, #222933 28px);
}
.logo {
    grid-row: 1 / 3;
    width: 40px;
    height: 41px;
    margin: 4px 0 0 1px;
    border: 1px solid #14171c;
    background: linear-gradient(#cfd1d3, #8b8d91);
}
.titlebar, .quick, .account, .winbtns {
    display: flex;
    align-items: center;
}
.qa {
    width: 24px;
    height: 24px;
}
.qa svg, .tool svg, .props > svg, .sgroup svg {
    width: 16px;
    height: 16px;
}
.qa.narrow {
    width: 16px;
}
.title {
    flex: 1;
    display: flex;
    justify-content: center;
    gap: 12px;
    color: #a3a9b4;
    white-space: nowrap;
}
.search {
    width: 180px;
    height: 22px;
    padding: 0 2px;
    border: 1px solid #242b36;
    font-style: italic;
}
.search::placeholder {
    color: #b8bdc6;
    opacity: 1;
}
.signin {
    width: 37px;
    margin-right: 44px;
    white-space: nowrap;
}
.cart {
    margin-left: 4px;
}
.help {
    margin-left: 8px;
    border-left: 1px solid #596274;
}
.winbtns {
    margin: 0 2px 0 61px;
}
.tabs {
    display: flex;
    color: #b4bac4;
}
.tabs a {
    padding: 3px 10px 0;
    white-space: nowrap;
}
.tabs .active {
    background: #3b4453;
    color: #fff;
}
.tabmin {
    height: 21px;
    margin-left: 18px;
}
.tabs .drop {
    height: 21px;
}

/* ribbon */
.ribbon {
    display: flex;
    padding: 0 0 2px 2px;
    border-bottom: 2px solid #454f60;
    background: #222933;
}
.panel {
    display: flex;
    flex-direction: column;
    padding-top: 4px;
    border-right: 1px solid #222933;
    background: #3b4453;
}
.tools {
    display: flex;
    height: 72px;
}
.ptitle {
    height: 21px;
    padding-top: 3px;
    gap: 6px;
}
.big {
    flex-direction: column;
    justify-content: flex-start;
    padding-top: 2px;
    line-height: 15px;
}
.big svg, .folded svg {
    width: 32px;
    height: 32px;
    margin-bottom: 4px;
    overflow: visible;
}
.big .caret {
    margin-top: 3px;
}
.grid {
    display: grid;
    grid-auto-rows: 24px;
    align-items: center;
    justify-items: start;
    align-content: start;
}
.tool {
    width: 16px;
    height: 24px;
}
.tool.selected {
    width: 24px;
    height: 22px;
    margin-left: -5px;
    border: 1px solid #6fb4ea;
    background: #2f4a66;
}
.pair {
    grid-template-columns: 19px 12px;
}
.four {
    grid-template-columns: 30px 29px 19px 22px 16px;
}
.five {
    grid-template-columns: repeat(5, 24px);
    padding-left: 3px;
}
.draw {
    width: 224px;
}
.line, .poly {
    width: 43px;
}
.circle {
    width: 56px;
}
.arc {
    width: 36px;
}
.draw .grid {
    margin-left: 7px;
}
.modify {
    width: 133px;
    padding-left: 6px;
}
.annotation {
    width: 149px;
}
.text {
    width: 48px;
}
.dimension {
    width: 60px;
}
.annotation .grid {
    margin-left: 6px;
}
.layers {
    width: 273px;
}
.layerprops {
    width: 62px;
}
.layerside {
    flex: 1;
    padding: 1px 3px 0 1px;
}
.combo {
    display: flex;
    align-items: center;
    position: relative;
    height: 22px;
    border: 1px solid #2a313d;
    background: #4d596d;
}
.combo::after {
    content: "";
    position: absolute;
    right: 2px;
    top: 8px;
    border: 4px solid transparent;
    border-top-color: #d8dbe0;
    border-bottom: 0;
    pointer-events: none;
}
.combo select {
    flex: 1;
    height: 20px;
    padding: 0;
    appearance: none;
}
.layerside .five {
    margin-top: 1px;
}
.block {
    width: 80px;
}
.insert {
    width: 42px;
}
.block .grid {
    margin-left: 3px;
}
.properties {
    width: 222px;
}
.match {
    width: 62px;
}
.props {
    flex: 1;
    display: grid;
    grid-template-columns: 16px 1fr;
    grid-auto-rows: 24px;
    align-items: center;
    column-gap: 3px;
    padding: 0 3px 0 2px;
}
.swatch {
    width: 16px;
    height: 16px;
    margin: 0 9px 0 11px;
    border: 1px solid #ccc;
    background: #f00;
}
.stroke {
    width: 64px;
    height: 1px;
    margin: 0 2px 0 3px;
    background: #fff;
}
.prow {
    display: flex;
}
.prow .ptitle {
    flex: 1;
}
.launcher {
    width: 16px;
    height: 21px;
    padding-top: 3px;
}
.groups {
    width: 69px;
}
.group {
    width: 42px;
}
.groups .grid {
    margin-left: 5px;
}
.folded {
    flex-direction: column;
    justify-content: flex-start;
    width: 58px;
    margin: 1px 0 0 3px;
    padding-top: 4px;
    background: #4d596d;
}
.panel + .folded {
    margin-left: 1px;
}
.folded .caret {
    margin: auto 0 5px;
}

/* drawing area */
.canvas {
    flex: 1;
    min-height: 0;
    margin-right: 1px;
    position: relative;
    background: #000;
}
.drawing {
    position: absolute;
    font-family: "Liberation Sans", Arial, sans-serif;
}
.geometry {
    stroke: #fff;
    fill: none;
    shape-rendering: crispEdges;
}
.joined {
    fill: #d81e1e;
}
.arrows, .dims, .captions {
    fill: #fff;
}
.dims {
    font-size: 20px;
    text-anchor: middle;
}
.captions {
    font-size: 50px;
}
.ucs {
    position: absolute;
    left: 7px;
    bottom: 7px;
    stroke: #fff;
    fill: none;
}
.docbtns {
    position: absolute;
    top: 9px;
    right: 11px;
    display: flex;
    gap: 8px;
}
.docbtns svg {
    width: 12px;
    height: 12px;
    stroke: #fff;
    fill: none;
}
.viewcube {
    position: absolute;
    top: 34px;
    right: 13px;
    display: flex;
    flex-direction: column;
    align-items: center;
    font-family: "Liberation Sans", Arial, sans-serif;
}
.viewcube text {
    fill: #b0b0b0;
    font-size: 16px;
    font-weight: bold;
    text-anchor: middle;
}
.viewcube .face {
    fill: #4a4d52;
    font-size: 10px;
}
.wcs {
    width: 48px;
    height: 17px;
    margin-top: 12px;
    gap: 7px;
    border: 1px solid #8d8d94;
    border-radius: 4px;
    background: #74747c;
    color: #b5b5ba;
    font-size: 11px;
}
.wcs .caret {
    border-top-color: #8f8f98;
}
.navbar {
    position: absolute;
    top: 197px;
    right: 4px;
    border-radius: 4px;
    background: #444;
}
.command {
    position: absolute;
    left: 132px;
    right: 132px;
    bottom: 1px;
    height: 25px;
    display: flex;
    align-items: center;
    background: #222933;
}
.command button {
    width: 24px;
}
.command button svg {
    width: 16px;
    height: 16px;
}
.grip {
    width: 6px;
    height: 17px;
    margin-left: 4px;
    background: repeating-linear-gradient(#222933 0 1px, transparent 1px 3px), repeating-linear-gradient(90deg, #9aa0aa 0 1px, transparent 1px 2px);
}
.command .grip + button {
    width: 20px;
}
.field {
    flex: 1;
    height: 25px;
    margin-left: 2px;
    padding: 0 4px;
    display: flex;
    align-items: center;
    gap: 2px;
    border-radius: 0 2px 2px 0;
    background: #b1b1b1;
}
.field input {
    flex: 1;
    padding: 0 4px;
    font-family: "DejaVu Sans Mono", monospace;
    font-style: italic;
    color: #333;
}
.field input::placeholder {
    color: #4c4c4c;
    opacity: 1;
}
.field .caret {
    border-width: 4px 4px 0 4px;
    border-top-color: #444;
}
.field .caret.up {
    border-width: 0 4px 4px 4px;
}

/* status bar */
.statusbar {
    display: flex;
    justify-content: space-between;
    height: 29px;
    border-top: 1px solid #3b4453;
    background: #222933;
}
.layouts {
    display: flex;
    gap: 2px;
    padding-left: 12px;
    color: #b4bac4;
}
.layouts a {
    height: 18px;
    padding: 1px 11px 0;
    border-radius: 0 0 12px 12px;
    background: #2a323e;
}
.layouts .active {
    background: #3b4453;
    color: #fff;
    font-weight: bold;
}
.layouts .plus {
    padding: 1px 7px 0;
    font-size: 16px;
}
.status {
    display: flex;
    gap: 3px;
    padding: 1px 3px 0 0;
}
.sgroup {
    display: flex;
    height: 24px;
    background: #3b4453;
}
.sgroup button {
    width: 24px;
    height: 24px;
}
.sgroup .drop {
    width: 14px;
}
.sgroup .wide {
    width: 48px;
}
.sgroup .scale {
    width: 35px;
    gap: 5px;
}
.sgroup .on {
    width: 22px;
    height: 22px;
    margin: 1px;
    background: #5b8cc8;
}

/* strip of the desktop taskbar under the window */
.taskbar {
    display: flex;
    gap: 4px;
    height: 3px;
    padding: 1px 0 0 60px;
    background: #14181f;
}
.taskbar i {
    width: 58px;
    background: #b9bdc4;
}
```
